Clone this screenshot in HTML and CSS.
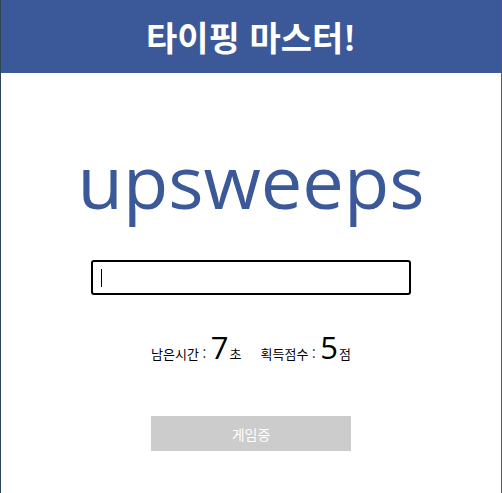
FILE: index.html
```html
<!DOCTYPE html>
<html lang="ko">
<head>
<meta charset="utf-8">
<link rel="stylesheet" href="styles.css">
</head>
<body>
<div class="page">
  <header class="header">
    <h1 class="title">타이핑 마스터!</h1>
  </header>
  <main class="main">
    <div class="word">upsweeps</div>
    <div class="input-box"><span class="caret"></span></div>
    <div class="stats">
      <span class="label">남은시간 :&nbsp;</span><span class="num">7</span><span class="unit">초</span>
      <span class="label gap">획득점수 :&nbsp;</span><span class="num">5</span><span class="unit">점</span>
    </div>
    <button class="btn" type="button">게임중</button>
  </main>
</div>
</body>
</html>
```

FILE: styles.css
```css
html, body {
  margin: 0;
  padding: 0;
  background: #ffffff;
}
.page {
  width: 502px;
  height: 493px;
  box-sizing: border-box;
  border-left: 1px solid #2b4755;
  border-right: 1px solid #5a5a5a;
  font-family: "Noto Sans CJK KR", "Noto Sans", sans-serif;
  overflow: hidden;
}
.header {
  height: 73px;
  background: #3b5998;
  display: flex;
  align-items: center;
  justify-content: center;
}
.title {
  margin: 0;
  color: #ffffff;
  font-size: 34px;
  font-weight: 700;
  line-height: 1;
}
.main {
  display: flex;
  flex-direction: column;
  align-items: center;
}
.word {
  margin-top: 58px;
  font-family: "Open Sans", sans-serif;
  font-size: 74px;
  line-height: 100px;
  height: 100px;
  color: #3b5998;
}
.input-box {
  margin-top: 29px;
  width: 320px;
  height: 35px;
  box-sizing: border-box;
  border: 2px solid #000000;
  border-radius: 3px;
  display: flex;
  align-items: center;
  padding-left: 8px;
}
.caret {
  width: 1px;
  height: 18px;
  background: #000000;
}
.stats {
  margin-top: 37px;
  display: flex;
  align-items: baseline;
  color: #000000;
}
.label {
  font-size: 13px;
}
.gap {
  margin-left: 19px;
}
.num {
  font-family: "Open Sans", sans-serif;
  font-size: 31px;
  line-height: 1;
  margin: 0 1px 0 1px;
}
.unit {
  font-size: 13px;
}
.btn {
  margin-top: 53px;
  width: 200px;
  height: 35px;
  border: none;
  background: #cccccc;
  color: #ffffff;
  font-family: "Noto Sans CJK KR", sans-serif;
  font-size: 14px;
  padding: 0;
}
```
